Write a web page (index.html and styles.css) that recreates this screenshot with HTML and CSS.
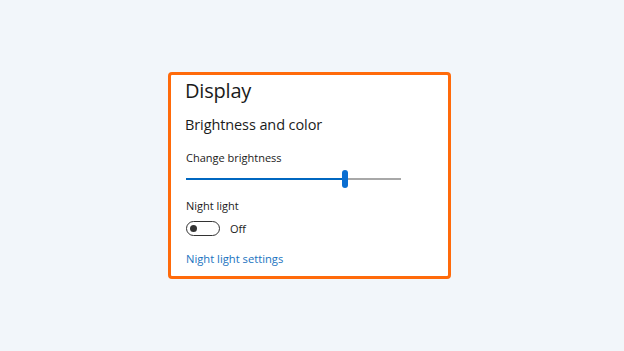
FILE: index.html
```html
<!DOCTYPE html>
<html>
<head>
<meta charset="utf-8">
<link rel="stylesheet" href="styles.css">
</head>
<body>
<div class="card">
  <div class="title">Display</div>
  <div class="subtitle">Brightness and color</div>
  <div class="label">Change brightness</div>
  <div class="slider">
    <div class="track-fill"></div>
    <div class="thumb"></div>
    <div class="track-rest"></div>
  </div>
  <div class="label nl">Night light</div>
  <div class="toggle-row">
    <div class="toggle"><div class="knob"></div></div>
    <span class="state">Off</span>
  </div>
  <a class="link">Night light settings</a>
</div>
</body>
</html>
```
FILE: styles.css
```css
html, body { margin: 0; padding: 0; }
body {
  width: 624px; height: 351px;
  background: #f2f6fa;
  padding: 72px 0 0 168px;
  box-sizing: border-box;
  font-family: "Open Sans", "Noto Sans", sans-serif;
  color: #1b1b1b;
}
.card {
  box-sizing: border-box;
  width: 283px; height: 207px;
  background: #fff;
  border: 3px solid #ff6a0a;
  border-radius: 4px;
  padding: 3px 14px 0 14px;
  display: flex; flex-direction: column;
}
.title { font-size: 20px; line-height: 26px; letter-spacing: -0.2px; }
.subtitle { font-size: 14.5px; line-height: 20px; margin-top: 11px; letter-spacing: -0.1px; }
.label { font-size: 11px; line-height: 15px; margin-top: 15px; padding-left: 1px; }
.slider { display: flex; align-items: center; height: 18px; margin-top: 5px; width: 215px; padding-left: 1px; }
.track-fill { width: 156px; height: 2px; background: #0067c0; }
.thumb { width: 6px; height: 18px; border-radius: 3px; background: #0a6ed1; }
.track-rest { flex: 1; height: 2px; background: #a8a8a8; }
.label.nl { margin-top: 10px; }
.toggle-row { display: flex; align-items: center; margin-top: 8px; padding-left: 1px; }
.toggle {
  box-sizing: border-box; width: 34px; height: 15px;
  border: 1.5px solid #333; border-radius: 8px;
  display: flex; align-items: center; padding-left: 3px;
}
.knob { width: 7px; height: 7px; border-radius: 50%; background: #333; }
.state { font-size: 11px; margin-left: 10px; }
.link { font-size: 11.2px; color: #1a73c0; margin-top: 15px; padding-left: 1px; }
```
